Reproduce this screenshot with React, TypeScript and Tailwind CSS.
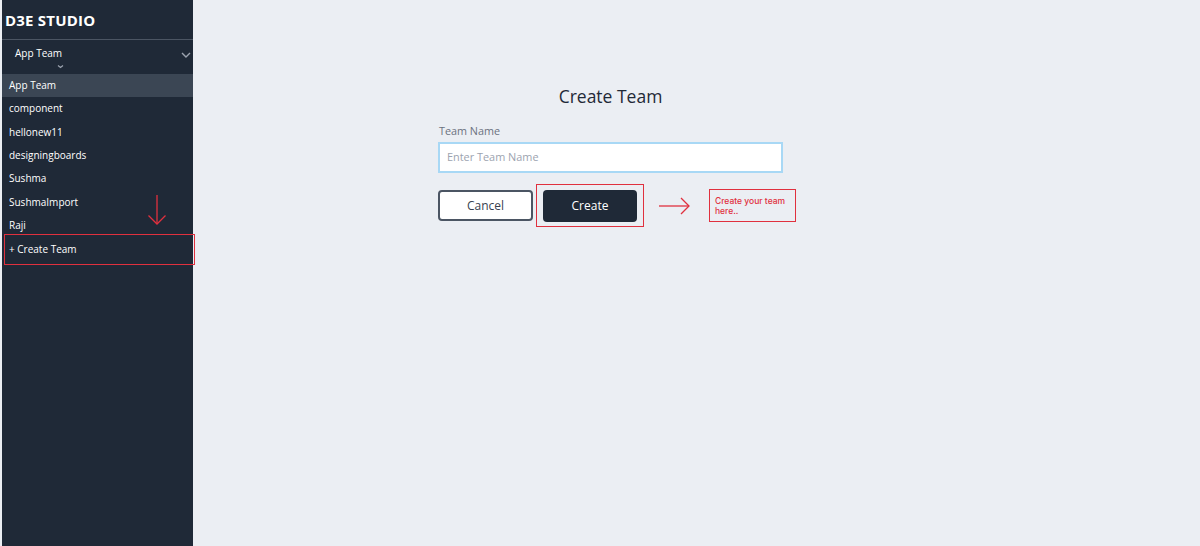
import React from "react";

const teams = ["component", "hellonew11", "designingboards", "Sushma", "SushmaImport", "Raji"];

export default function App() {
  return (
    <div className="flex h-[546px] w-[1200px] bg-[#ebeef3] font-['Open_Sans',sans-serif]">
      <aside className="ml-[2px] flex w-[191px] shrink-0 flex-col bg-[#1f2937] text-white">
        <div className="flex h-[39px] items-end text-[15px] font-bold leading-none tracking-[0.2px]">
          <span className="pl-[3px] pb-[11px]">D3E STUDIO</span>
        </div>
        <div className="h-px bg-[#4b5563]" />
        <div className="relative h-[34px]">
          <span className="absolute left-[13px] top-[6px] text-[10px] leading-[14px]">App Team</span>
          <svg className="absolute right-[2px] top-[11px]" width="10" height="8" viewBox="0 0 10 8" fill="none" stroke="#9ca3af" strokeWidth="1.4">
            <path d="M1 2l4 4 4-4" />
          </svg>
          <svg className="absolute left-[55px] top-[24px]" width="7" height="5" viewBox="0 0 7 5" fill="none" stroke="#9ca3af" strokeWidth="1.2">
            <path d="M1 1.5l2.5 2 2.5-2" />
          </svg>
        </div>
        <div className="flex h-[23px] items-center bg-[#3b4654] pl-[7px] text-[10px]">App Team</div>
        {teams.map((t) => (
          <div key={t} className="flex h-[23.4px] items-center pl-[7px] text-[10px]">
            {t}
          </div>
        ))}
        <div className="relative">
          <svg className="absolute right-[26px] top-[-43px]" width="20" height="32" viewBox="0 0 20 32" fill="none" stroke="#e0303e" strokeWidth="1.3">
            <path d="M10 1v29" />
            <path d="M1.5 21.5l8.5 8.5 8.5-8.5" />
          </svg>
          <div className="ml-[2px] mr-[-2px] mt-[-3px] flex h-[31px] items-center border border-[#e0303e] pl-[4px] text-[10px]">
            + Create Team
          </div>
        </div>
      </aside>
      <main className="flex-1">
        <div className="ml-[245px] mt-[84px] w-[345px]">
          <h1 className="text-center text-[17.5px] font-medium leading-[24px] text-[#1f2937]">Create Team</h1>
          <label className="mt-[16px] block pl-[1px] text-[10.8px] leading-[14px] text-[#6b7280]">Team Name</label>
          <div className="mt-[4px] flex h-[31px] items-center border-2 border-[#a8d8f5] bg-white pl-[7px] text-[10.9px] text-[#9ca3af]">
            Enter Team Name
          </div>
          <div className="mt-[11px] flex items-center">
            <button className="flex h-[31px] w-[95px] shrink-0 items-center justify-center rounded-[4px] border-2 border-[#4b5563] bg-white text-[12px] text-[#374151]">
              Cancel
            </button>
            <div className="ml-[3px] flex h-[43px] w-[108px] shrink-0 items-center justify-center border border-[#e0303e]">
              <button className="flex h-[32px] w-[94px] items-center justify-center rounded-[4px] bg-[#1f2937] text-[12px] text-white">
                Create
              </button>
            </div>
            <svg className="ml-[14px] shrink-0" width="33" height="20" viewBox="0 0 33 20" fill="none" stroke="#e0303e" strokeWidth="1.3">
              <path d="M1 10h30" />
              <path d="M23 2l8 8-8 8" />
            </svg>
            <div className="ml-[18px] flex h-[33px] w-[87px] shrink-0 flex-col justify-center border border-[#e0303e] pl-[5px] font-['Inter',sans-serif] text-[8.5px] font-medium leading-[10px] text-[#e0303e]">
              <span>Create your team</span>
              <span>here..</span>
            </div>
          </div>
        </div>
      </main>
    </div>
  );
}
